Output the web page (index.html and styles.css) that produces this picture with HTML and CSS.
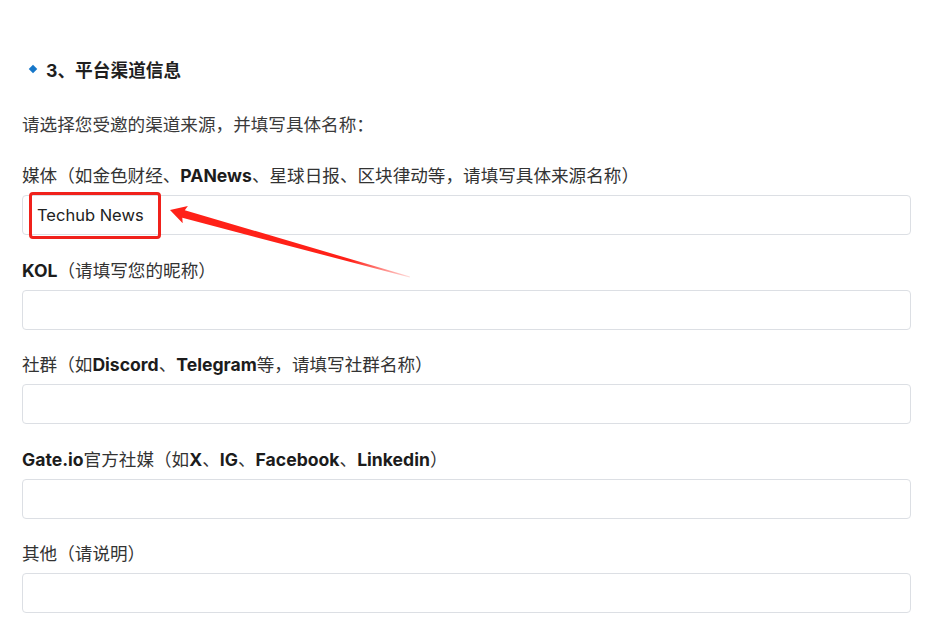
FILE: index.html
```html
<!DOCTYPE html>
<html lang="zh-CN">
<head>
<meta charset="utf-8">
<title>平台渠道信息</title>
<link rel="stylesheet" href="styles.css">
</head>
<body>
<main class="page">
  <h2 class="section-title"><span class="diamond"></span>3、平台渠道信息</h2>
  <p class="intro">请选择您受邀的渠道来源，并填写具体名称：</p>

  <div class="field">
    <label class="label">媒体（如金色财经、<b>PANews</b>、星球日报、区块律动等，请填写具体来源名称）</label>
    <div class="input"><span class="value">Techub News</span></div>
  </div>
  <div class="field">
    <label class="label"><b>KOL</b>（请填写您的昵称）</label>
    <div class="input"></div>
  </div>
  <div class="field">
    <label class="label">社群（如<b>Discord</b>、<b>Telegram</b>等，请填写社群名称）</label>
    <div class="input"></div>
  </div>
  <div class="field">
    <label class="label"><b>Gate.io</b>官方社媒（如<b>X</b>、<b>IG</b>、<b>Facebook</b>、<b>Linkedin</b>）</label>
    <div class="input"></div>
  </div>
  <div class="field">
    <label class="label">其他（请说明）</label>
    <div class="input"></div>
  </div>

  <div class="highlight"></div>
  <svg class="arrow" width="935" height="636" viewBox="0 0 935 636">
    <defs>
      <linearGradient id="fade" gradientUnits="userSpaceOnUse" x1="170" y1="210" x2="410" y2="277">
        <stop offset="0" stop-color="#ff2118"/>
        <stop offset="0.75" stop-color="#ff2118"/>
        <stop offset="1" stop-color="#ff2118" stop-opacity="0.15"/>
      </linearGradient>
    </defs>
    <polygon fill="url(#fade)" points="170,210 187.9,206 184.8,210.2 410,276.6 409.8,277.6 182.3,217.8 182.7,223.2"/>
  </svg>
</main>
</body>
</html>
```

FILE: styles.css
```css
html, body {
  margin: 0;
  padding: 0;
  background: #ffffff;
}

.page {
  position: relative;
  padding: 57px 24px 0 22px;
  font-family: Inter, "Noto Sans CJK SC", sans-serif;
  color: #2b2b2b;
}

.section-title {
  display: flex;
  align-items: center;
  margin: 0;
  height: 24px;
  font-size: 17.7px;
  font-weight: 700;
  color: #1f1f1f;
}

.diamond {
  width: 6px;
  height: 6px;
  background: #1677c9;
  transform: rotate(45deg);
  margin: 0 10px 0 8px;
}

.intro {
  margin: 32px 0 27px;
  height: 24px;
  line-height: 24px;
  font-size: 17.6px;
  color: #3a3a3a;
}

.field {
  display: flex;
  flex-direction: column;
  gap: 7px;
  margin-bottom: 23.5px;
}

.label {
  height: 24px;
  line-height: 24px;
  font-size: 17.6px;
  color: #333333;
  white-space: nowrap;
}

.label b {
  font-weight: 700;
  color: #1c1c1c;
}

.input {
  height: 38px;
  border: 1px solid #dcdfe4;
  border-radius: 4px;
  display: flex;
  align-items: center;
  padding-left: 14px;
}

.value {
  font-size: 16.5px;
  color: #222222;
}

.highlight {
  position: absolute;
  left: 29px;
  top: 192px;
  width: 126px;
  height: 41px;
  border: 3px solid #f0211b;
  border-radius: 4px;
}

.arrow {
  position: absolute;
  left: 0;
  top: 0;
  pointer-events: none;
}
```
